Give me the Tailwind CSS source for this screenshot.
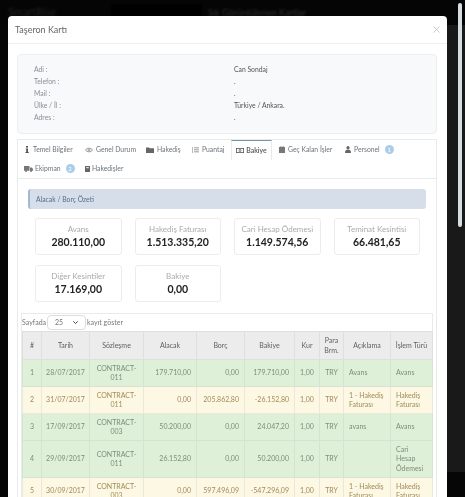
<!DOCTYPE html>
<html lang="tr">
<head>
    <meta charset="UTF-8">
    <title>Taşeron Kartı</title>
    <script src="https://cdn.jsdelivr.net/npm/@tailwindcss/browser@4"></script>
</head>
<body class="relative h-[497px] overflow-hidden bg-[#060606] font-['Lato','Open_Sans',sans-serif]">
    <!-- arka plan sayfa -->
    <div class="absolute inset-0 overflow-hidden blur-[1px]">
        <div class="flex h-[25px] items-center bg-[#050505] pl-[8px] text-[9px] text-[#222]">
            <span class="w-[103px] text-[11px]">SmartRise</span>
            <span class="h-[18px] w-[91px] bg-black"></span>
            <span class="ml-[6px] text-[#303030]">Sık Görüntülenen Kartlar</span>
        </div>
    </div>
    <div class="absolute right-0 top-[25px] h-[447px] w-[18px] bg-[#191919]"></div>
    <div class="absolute right-[3px] top-[3px] h-[224px] w-[4px] rounded-full bg-[#d5dfe3]"></div>

    <!-- modal -->
    <div class="relative ml-[8px] mt-[16px] w-[439px] rounded-t-[4px] bg-white text-[#6c757d] blur-[0.3px]">
        <div class="flex h-[28px] items-center justify-between border-b border-[#eceef1] pl-[7px] pr-[7px]">
            <h5 class="text-[9px] text-[#666]">Taşeron Kartı</h5>
            <svg class="h-[7px] w-[7px]" viewBox="0 0 7 7" fill="none" stroke="#c8c8c8" stroke-width="1"><path d="M.5.500 6.500 6.500M6.500.500.5 6.500"/></svg>
        </div>
        <div class="pl-[9px] pr-[10px] pt-[10px]">
            <div class="h-[80px] rounded-[4px] border border-[#eceef0] bg-[#f8f9fa] pl-[16px] pt-[8px] text-[6.800px] leading-[12px]">
                <div class="flex"><span class="w-[200px] text-[#8a8f94]">Adi :</span><span class="text-[#555]">Can Sondaj</span></div>
                <div class="flex"><span class="w-[200px] text-[#8a8f94]">Telefon :</span><span class="text-[#555]">.</span></div>
                <div class="flex"><span class="w-[200px] text-[#8a8f94]">Mail :</span><span class="text-[#555]">.</span></div>
                <div class="flex"><span class="w-[200px] text-[#8a8f94]">Ülke / İl :</span><span class="text-[#555]">Türkiye / Ankara.</span></div>
                <div class="flex"><span class="w-[200px] text-[#8a8f94]">Adres :</span><span class="text-[#555]">.</span></div>
            </div>

            <div class="mt-[5px] border border-[#e8eaec] border-b-0">
                <div class="border-b border-[#e8eaec] text-[6.800px] text-[#6c757d]">
                    <div class="flex h-[19px] items-center pl-[7px]">
                        <span class="flex w-[60px] items-center gap-[4px]"><svg class="h-[7px] w-[4px]" viewBox="0 0 4 7" fill="#555"><rect x="1" y="0" width="2" height="1.600"/><path d="M.6 2.400H3v3.600h.8V7H.4V6h.8V3.300H.6z"/></svg>Temel Bilgiler</span>
                        <span class="flex w-[61px] items-center gap-[3px]"><svg class="h-[6px] w-[8px]" viewBox="0 0 8 6" fill="none" stroke="#888" stroke-width=".8"><path d="M.4 3C2 .6 6 .6 7.600 3 6 5.400 2 5.400.4 3z"/><circle cx="4" cy="3" r="1"/></svg>Genel Durum</span>
                        <span class="flex w-[46px] items-center gap-[3px]"><svg class="h-[6px] w-[8px]" viewBox="0 0 8 6" fill="#666"><path d="M0 .5h3l.7.8H8V6H0z"/></svg>Hakediş</span>
                        <span class="flex w-[39px] items-center gap-[3px]"><svg class="h-[6px] w-[7px]" viewBox="0 0 7 6" fill="#777"><path d="M0 .5h1v1H0zM2 .6h5v.7H2zM0 2.500h1v1H0zM2 2.600h5v.7H2zM0 4.500h1v1H0zM2 4.600h5v.7H2z"/></svg>Puantaj</span>
                        <span class="flex h-[20px] w-[41px] items-center justify-center gap-[2px] border-x border-t-[1px] border-x-[#e8eaec] border-t-[#6f95ab] bg-white font-bold text-[#666]"><svg class="h-[5px] w-[8px]" viewBox="0 0 8 5" fill="none" stroke="#555" stroke-width=".8"><rect x=".4" y=".4" width="7.200" height="4.200"/><circle cx="4" cy="2.500" r="1"/></svg>Bakiye</span>
                        <span class="ml-[7px] flex w-[66px] items-center gap-[3px]"><svg class="h-[7px] w-[6px]" viewBox="0 0 6 7" fill="#777"><path d="M0 1h6v6H0z"/><path d="M1.500 0h.8v1.500h-.8zM3.700 0h.8v1.500h-.8z"/></svg>Geç Kalan İşler</span>
                        <span class="flex items-center gap-[3px]"><svg class="h-[7px] w-[6px]" viewBox="0 0 6 7" fill="#666"><circle cx="3" cy="1.700" r="1.600"/><path d="M0 7c0-2.500 1.200-3.400 3-3.400S6 4.500 6 7z"/></svg>Personel<span class="ml-[2px] flex h-[9px] w-[9px] items-center justify-center rounded-full bg-[#a9cdea] text-[6px] text-white">1</span></span>
                    </div>
                    <div class="flex h-[19px] items-center pl-[6px]">
                        <span class="flex w-[61px] items-center gap-[2px]"><svg class="h-[6px] w-[9px]" viewBox="0 0 9 6" fill="#777"><path d="M0 0h5.500v4.800H0zM6 1.500h1.800L9 3v1.800H6z"/><circle cx="2" cy="5" r="1"/><circle cx="7" cy="5" r="1"/></svg>Ekipman<span class="ml-[3px] flex h-[9px] w-[9px] items-center justify-center rounded-full bg-[#a9cdea] text-[6px] text-white">2</span></span>
                        <span class="flex items-center gap-[2px]"><svg class="h-[6px] w-[5px]" viewBox="0 0 5 6" fill="#666"><path d="M0 0h5v6H0z"/><path d="M1.200 1.200h2.600v1H1.200z" fill="#fff"/></svg>Hakedişler</span>
                    </div>
                </div>

                <div class="px-[10px] pt-[10px]">
                    <div class="flex h-[20px] items-center rounded-[3px] border-l-2 border-l-[#a4b9d0] bg-[#d6deea] pl-[6px] text-[6.800px] text-[#51708f]">Alacak / Borç Özeti</div>
                    <div class="mt-[9px] grid grid-cols-[86.500px_86.500px_86.500px_86.500px] gap-x-[13px] gap-y-[10px] pl-[7px]">
                        <div class="flex h-[37px] flex-col items-center justify-center rounded-[3px] border border-[#ececec] bg-white"><span class="text-[8px] leading-[11px] text-[#aaa]">Avans</span><span class="text-[10.500px] font-bold leading-[14px] text-[#222]">280.110,00</span></div>
                        <div class="flex h-[37px] flex-col items-center justify-center rounded-[3px] border border-[#ececec] bg-white"><span class="text-[8px] leading-[11px] text-[#aaa]">Hakediş Faturası</span><span class="text-[10.500px] font-bold leading-[14px] text-[#222]">1.513.335,20</span></div>
                        <div class="flex h-[37px] flex-col items-center justify-center rounded-[3px] border border-[#ececec] bg-white"><span class="text-[8px] leading-[11px] text-[#aaa]">Cari Hesap Ödemesi</span><span class="text-[10.500px] font-bold leading-[14px] text-[#222]">1.149.574,56</span></div>
                        <div class="flex h-[37px] flex-col items-center justify-center rounded-[3px] border border-[#ececec] bg-white"><span class="text-[8px] leading-[11px] text-[#aaa]">Teminat Kesintisi</span><span class="text-[10.500px] font-bold leading-[14px] text-[#222]">66.481,65</span></div>
                        <div class="flex h-[37px] flex-col items-center justify-center rounded-[3px] border border-[#ececec] bg-white"><span class="text-[8px] leading-[11px] text-[#aaa]">Diğer Kesintiler</span><span class="text-[10.500px] font-bold leading-[14px] text-[#222]">17.169,00</span></div>
                        <div class="flex h-[37px] flex-col items-center justify-center rounded-[3px] border border-[#ececec] bg-white"><span class="text-[8px] leading-[11px] text-[#aaa]">Bakiye</span><span class="text-[10.500px] font-bold leading-[14px] text-[#222]">0,00</span></div>
                    </div>
                </div>

                <div class="mx-[3px] mt-[11px] border border-b-0 border-[#e8eaec]">
                    <div class="flex h-[17px] items-center text-[7px] text-[#777]">
                        <span>Sayfada</span>
                        <span class="mx-[1px] flex h-[15px] w-[39px] items-center justify-between rounded-[4px] border border-[#ddd] px-[7px]">25<svg class="h-[3px] w-[5px]" viewBox="0 0 5 3" fill="none" stroke="#444" stroke-width="1"><path d="M.4.400 2.500 2.500 4.600.4"/></svg></span>
                        <span>kayıt göster</span>
                    </div>
                    <table class="w-[410px] table-fixed border-collapse text-center text-[7px] leading-[9.500px]">
                        <colgroup>
                            <col class="w-[19px]"><col class="w-[48px]"><col class="w-[54px]"><col class="w-[53px]"><col class="w-[48px]"><col class="w-[50px]"><col class="w-[25px]"><col class="w-[24px]"><col class="w-[47px]"><col class="w-[42px]">
                        </colgroup>
                        <thead class="bg-[#ececec] text-[#5f5f5f]">
                            <tr class="h-[28px]">
                                <th class="border border-[#dfdfdf] font-normal">#</th>
                                <th class="border border-[#dfdfdf] font-normal">Tarih</th>
                                <th class="border border-[#dfdfdf] font-normal">Sözleşme</th>
                                <th class="border border-[#dfdfdf] font-normal">Alacak</th>
                                <th class="border border-[#dfdfdf] font-normal">Borç</th>
                                <th class="border border-[#dfdfdf] font-normal">Bakiye</th>
                                <th class="border border-[#dfdfdf] font-normal">Kur</th>
                                <th class="border border-[#dfdfdf] font-normal">Para Brm.</th>
                                <th class="border border-[#dfdfdf] font-normal">Açıklama</th>
                                <th class="border border-[#dfdfdf] font-normal">İşlem Türü</th>
                            </tr>
                        </thead>
                        <tbody>
                            <tr class="h-[27px] bg-[#dff0d8] text-[#7b8f7d]">
                                <td class="border border-[#d6e3d2]">1</td><td class="border border-[#d6e3d2]">28/07/2017</td><td class="border border-[#d6e3d2]">CONTRACT-<br>011</td><td class="border border-[#d6e3d2] pr-[5px] text-right">179.710,00</td><td class="border border-[#d6e3d2] pr-[5px] text-right">0,00</td><td class="border border-[#d6e3d2] pr-[5px] text-right">179.710,00</td><td class="border border-[#d6e3d2]">1,00</td><td class="border border-[#d6e3d2]">TRY</td><td class="border border-[#d6e3d2] pl-[5px] text-left">Avans</td><td class="border border-[#d6e3d2] pl-[5px] text-left">Avans</td>
                            </tr>
                            <tr class="h-[27px] bg-[#fcf8e3] text-[#a38a5c]">
                                <td class="border border-[#ece8d6]">2</td><td class="border border-[#ece8d6]">31/07/2017</td><td class="border border-[#ece8d6]">CONTRACT-<br>011</td><td class="border border-[#ece8d6] pr-[5px] text-right">0,00</td><td class="border border-[#ece8d6] pr-[5px] text-right">205.862,80</td><td class="border border-[#ece8d6] pr-[5px] text-right">-26.152,80</td><td class="border border-[#ece8d6]">1,00</td><td class="border border-[#ece8d6]">TRY</td><td class="border border-[#ece8d6] pl-[5px] text-left">1 - Hakediş Faturası</td><td class="border border-[#ece8d6] pl-[5px] text-left">Hakediş Faturası</td>
                            </tr>
                            <tr class="h-[27px] bg-[#dff0d8] text-[#7b8f7d]">
                                <td class="border border-[#d6e3d2]">3</td><td class="border border-[#d6e3d2]">17/09/2017</td><td class="border border-[#d6e3d2]">CONTRACT-<br>003</td><td class="border border-[#d6e3d2] pr-[5px] text-right">50.200,00</td><td class="border border-[#d6e3d2] pr-[5px] text-right">0,00</td><td class="border border-[#d6e3d2] pr-[5px] text-right">24.047,20</td><td class="border border-[#d6e3d2]">1,00</td><td class="border border-[#d6e3d2]">TRY</td><td class="border border-[#d6e3d2] pl-[5px] text-left">avans</td><td class="border border-[#d6e3d2] pl-[5px] text-left">Avans</td>
                            </tr>
                            <tr class="h-[37px] bg-[#dff0d8] text-[#7b8f7d]">
                                <td class="border border-[#d6e3d2]">4</td><td class="border border-[#d6e3d2]">29/09/2017</td><td class="border border-[#d6e3d2]">CONTRACT-<br>011</td><td class="border border-[#d6e3d2] pr-[5px] text-right">26.152,80</td><td class="border border-[#d6e3d2] pr-[5px] text-right">0,00</td><td class="border border-[#d6e3d2] pr-[5px] text-right">50.200,00</td><td class="border border-[#d6e3d2]">1,00</td><td class="border border-[#d6e3d2]">TRY</td><td class="border border-[#d6e3d2] pl-[5px] text-left"></td><td class="border border-[#d6e3d2] pl-[5px] text-left">Cari<br>Hesap<br>Ödemesi</td>
                            </tr>
                            <tr class="h-[27px] bg-[#fcf8e3] text-[#a38a5c]">
                                <td class="border border-[#ece8d6]">5</td><td class="border border-[#ece8d6]">30/09/2017</td><td class="border border-[#ece8d6]">CONTRACT-<br>003</td><td class="border border-[#ece8d6] pr-[5px] text-right">0,00</td><td class="border border-[#ece8d6] pr-[5px] text-right">597.496,09</td><td class="border border-[#ece8d6] pr-[5px] text-right">-547.296,09</td><td class="border border-[#ece8d6]">1,00</td><td class="border border-[#ece8d6]">TRY</td><td class="border border-[#ece8d6] pl-[5px] text-left">1 - Hakediş Faturası</td><td class="border border-[#ece8d6] pl-[5px] text-left">Hakediş Faturası</td>
                            </tr>
                        </tbody>
                    </table>
                </div>
            </div>
        </div>
    </div>
</body>
</html>
